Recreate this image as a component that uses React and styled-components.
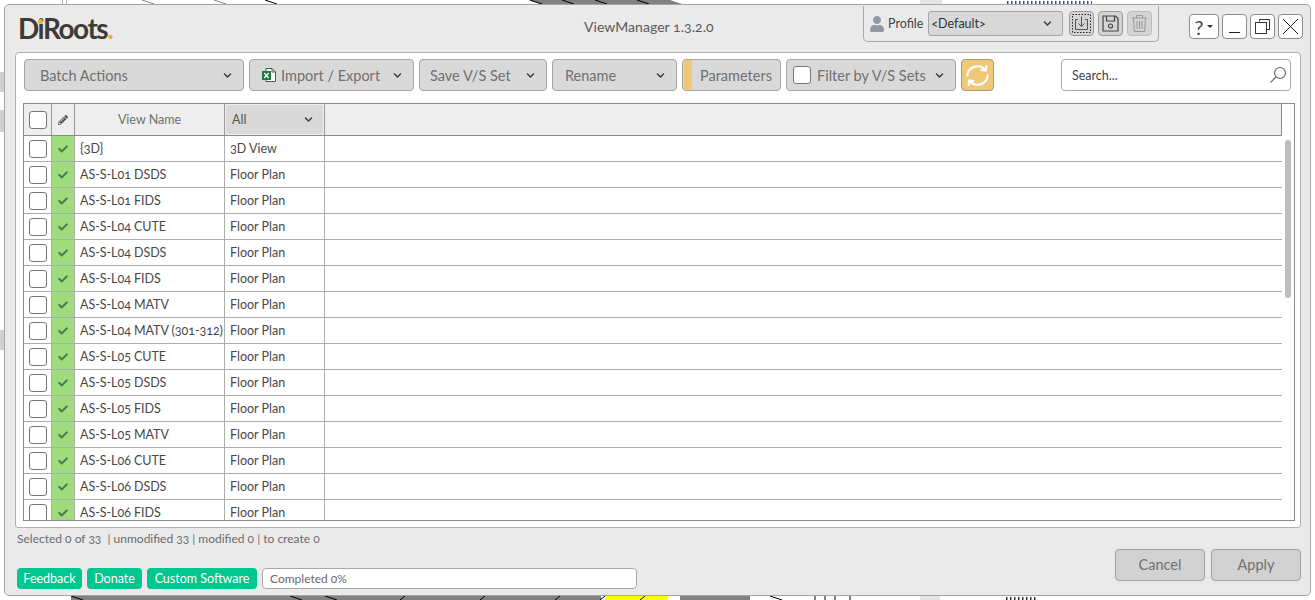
import React from "react";
import styled, { createGlobalStyle } from "styled-components";
import { FaCheck, FaPencilAlt, FaUser, FaChevronDown } from "react-icons/fa";

const rows = [
  ["{3D}", "3D View"],
  ["AS-S-L01 DSDS", "Floor Plan"],
  ["AS-S-L01 FIDS", "Floor Plan"],
  ["AS-S-L04 CUTE", "Floor Plan"],
  ["AS-S-L04 DSDS", "Floor Plan"],
  ["AS-S-L04 FIDS", "Floor Plan"],
  ["AS-S-L04 MATV", "Floor Plan"],
  ["AS-S-L04 MATV (301-312)", "Floor Plan"],
  ["AS-S-L05 CUTE", "Floor Plan"],
  ["AS-S-L05 DSDS", "Floor Plan"],
  ["AS-S-L05 FIDS", "Floor Plan"],
  ["AS-S-L05 MATV", "Floor Plan"],
  ["AS-S-L06 CUTE", "Floor Plan"],
  ["AS-S-L06 DSDS", "Floor Plan"],
  ["AS-S-L06 FIDS", "Floor Plan"],
];

const GlobalStyle = createGlobalStyle`
  html, body {
    margin: 0;
    height: 600px;
    overflow: hidden;
    background: #fff;
    font-family: "Lato", "Open Sans", sans-serif;
    font-feature-settings: "onum";
    color: #555;
  }
`;

const Desktop = styled.div`
  width: 1315px;
  height: 600px;
  padding: 4px;
  box-sizing: border-box;
  position: relative;
`;

// the drawing behind the dialog, only its edges show
const Backdrop = styled.svg`
  position: absolute;
  left: 0;
  top: 0;
`;

const Window = styled.div`
  width: 1307px;
  height: 592px;
  box-sizing: border-box;
  background: #eaeaea;
  border: 1px solid #a4a4a4;
  border-radius: 5px;
  display: flex;
  flex-direction: column;
  padding: 0 9px 0 10px;
  position: relative;
`;

const TitleBar = styled.div`
  height: 47px;
  flex: none;
  display: flex;
  align-items: flex-start;
`;

const Logo = styled.div`
  font-size: 28px;
  font-weight: 700;
  letter-spacing: -1.5px;
  color: #3c3b36;
  margin: 5px 0 0 3px;
  line-height: 36px;
  width: 566px;
  flex: none;
  position: relative;
  font-feature-settings: normal;
  span {
    color: #eeb046;
  }
`;

const LogoDot = styled.i`
  position: absolute;
  left: 20px;
  top: 9px;
  width: 5px;
  height: 5px;
  border-radius: 50%;
  background: #eeb046;
`;

const WindowTitle = styled.div`
  font-size: 14px;
  line-height: 18px;
  margin-top: 13px;
  width: 279px;
  flex: none;
  color: #5a5a5a;
  letter-spacing: 0.05px;
`;

const ProfileBox = styled.div`
  width: 296px;
  height: 36px;
  box-sizing: border-box;
  margin-top: 1px;
  border: 1px solid #a8a8a8;
  border-top: none;
  border-radius: 0 0 5px 5px;
  display: flex;
  align-items: center;
  padding: 0 0 0 5px;
  flex: none;
  margin-right: 30px;
`;

const ProfileLabel = styled.span`
  font-size: 12.5px;
  color: #444;
  margin: 0 5px 0 3px;
`;

const ProfileSelect = styled.div`
  width: 135px;
  height: 25px;
  box-sizing: border-box;
  background: #d9d9d9;
  border: 1px solid #a4a4a4;
  border-radius: 3px;
  display: flex;
  align-items: center;
  justify-content: space-between;
  padding: 0 10px 0 2px;
  font-size: 12.5px;
  color: #333;
  margin-right: 6px;
`;

const ProfileButton = styled.div`
  width: 25px;
  height: 25px;
  box-sizing: border-box;
  background: #d4d4d4;
  border: 1px solid ${(p) => (p.$faded ? "#bdbdbd" : "#9a9a9a")};
  border-radius: 4px;
  display: flex;
  align-items: center;
  justify-content: center;
  margin-right: 4px;
  flex: none;
`;

const WindowControls = styled.div`
  display: flex;
  gap: 3px;
  margin-top: 9px;
`;

const ControlButton = styled.div`
  width: ${(p) => p.$w || 25}px;
  height: 25px;
  box-sizing: border-box;
  background: #fff;
  border: 1px solid #8c8c8c;
  border-radius: 4px;
  display: flex;
  align-items: center;
  justify-content: center;
  color: #444;
  font-size: 20px;
`;

const Minimize = styled.span`
  width: 11px;
  height: 1px;
  background: #222;
  margin-top: 12px;
`;

const Caret = styled.span`
  width: 0;
  height: 0;
  margin-left: 4px;
  border-left: 3px solid transparent;
  border-right: 3px solid transparent;
  border-top: 3px solid #333;
`;

const Panel = styled.div`
  height: 476px;
  flex: none;
  box-sizing: border-box;
  background: #fff;
  border: 1px solid #b0b0b0;
  border-radius: 4px 4px 3px 3px;
  padding: 6px 5px 6px 7px;
  display: flex;
  flex-direction: column;
`;

const Toolbar = styled.div`
  display: flex;
  gap: 5px;
  height: 32px;
  flex: none;
  margin: 0 4px 12px 1px;
`;

const ToolButton = styled.div`
  width: ${(p) => p.$w}px;
  flex: none;
  box-sizing: border-box;
  background: #d9d9d9;
  border: 1px solid #a4a4a4;
  border-radius: 4px;
  display: flex;
  align-items: center;
  padding: 0 ${(p) => p.$pr || 11}px 0 ${(p) => p.$pl || 15}px;
  font-size: 14.5px;
  color: #707070;
  white-space: nowrap;
`;

const ToolLabel = styled.span`
  flex: 1;
`;

const Arrow = styled(FaChevronDown)`
  font-size: 9px;
  color: #3a3a3a;
  flex: none;
`;

const AccentBar = styled.span`
  width: 8px;
  align-self: stretch;
  background: #f0c879;
  border-radius: 3px 0 0 3px;
  margin-right: 8px;
`;

const Box = styled.span`
  display: block;
  width: 18px;
  height: 18px;
  flex: none;
  box-sizing: border-box;
  background: #fff;
  border: 1px solid #777;
  border-radius: 3px;
`;

const FilterBox = styled(Box)`
  margin-right: 6px;
`;

const RefreshButton = styled.div`
  width: 33px;
  flex: none;
  box-sizing: border-box;
  background: #f0c879;
  border: 1px solid #a89a7c;
  border-radius: 4px;
  display: flex;
  align-items: center;
  justify-content: center;
`;

const SearchBox = styled.div`
  width: 230px;
  margin-left: auto;
  box-sizing: border-box;
  background: #fff;
  border: 1px solid #a8a8a8;
  border-radius: 4px;
  display: flex;
  align-items: center;
  justify-content: space-between;
  padding: 0 3px 0 10px;
  font-size: 12.5px;
  color: #444;
`;

const Grid = styled.div`
  flex: 1;
  min-height: 0;
  border: 1px solid #8a8a8a;
  position: relative;
  overflow: hidden;
`;

const HeaderRow = styled.div`
  height: 31px;
  display: flex;
  background: #eeeeee;
  border-bottom: 1px solid #8a8a8a;
  border-right: 1px solid #8a8a8a;
  margin-right: 12px;
`;

const BodyRow = styled.div`
  height: 25px;
  display: flex;
  border-bottom: 1px solid #adadad;
  margin-right: 12px;
`;

const Cell = styled.div`
  width: ${(p) => p.$w}px;
  flex: none;
  box-sizing: border-box;
  border-right: 1px solid ${(p) => (p.$head ? "#9a9a9a" : "#adadad")};
  display: flex;
  align-items: center;
  justify-content: ${(p) => (p.$center ? "center" : "flex-start")};
  padding-left: ${(p) => p.$pl || 0}px;
  background: ${(p) => p.$bg || "transparent"};
  font-size: 12.5px;
  color: ${(p) => (p.$head ? "#6e6e6e" : "#484848")};
  white-space: nowrap;
  overflow: hidden;
`;

const NameCell = styled(Cell)`
  letter-spacing: -0.05px;
`;

const HeaderSelect = styled.div`
  width: calc(100% - 2px);
  height: calc(100% - 2px);
  box-sizing: border-box;
  margin-left: 1px;
  background: #d9d9d9;
  border-radius: 2px;
  display: flex;
  align-items: center;
  justify-content: space-between;
  padding: 0 10px 0 6px;
  color: #555;
`;

const Scrollbar = styled.div`
  position: absolute;
  right: 3px;
  top: 36px;
  width: 6px;
  height: 158px;
  background: #bdbdbd;
  border-radius: 3px;
`;

const StatusLine = styled.div`
  font-size: 12px;
  color: #6a6a6a;
  line-height: 16px;
  margin: 3px 0 0 2px;
  white-space: pre;
  flex: none;
`;

const FooterRow = styled.div`
  display: flex;
  flex: none;
  height: 40px;
  align-items: flex-end;
  margin: 2px 0 0 2px;
`;

const LinkButton = styled.div`
  width: ${(p) => p.$w}px;
  height: 21px;
  box-sizing: border-box;
  background: #00c78f;
  border-radius: 4px;
  color: #fff;
  font-size: 12.5px;
  padding-bottom: 1px;
  display: flex;
  align-items: center;
  justify-content: center;
  margin-right: 5px;
  flex: none;
`;

const Progress = styled.div`
  width: 375px;
  height: 21px;
  box-sizing: border-box;
  background: #fff;
  border: 1px solid #a8a8a8;
  border-radius: 4px;
  font-size: 12px;
  color: #6a6a6a;
  display: flex;
  align-items: center;
  padding-left: 7px;
  flex: none;
`;

const ActionGroup = styled.div`
  margin-left: auto;
  align-self: flex-start;
  display: flex;
  gap: 6px;
`;

const ActionButton = styled.div`
  width: 90px;
  height: 32px;
  box-sizing: border-box;
  background: #d2d2d2;
  border: 1px solid #a0a0a0;
  border-radius: 4px;
  color: #707070;
  font-size: 14.5px;
  padding-bottom: 2px;
  display: flex;
  align-items: center;
  justify-content: center;
  flex: none;
`;

function BackdropDrawing() {
  return (
    <Backdrop width="1315" height="600" viewBox="0 0 1315 600">
      <rect x="0" y="72" width="4" height="20" fill="#d0d0d0" />
      <rect x="0" y="110" width="4" height="22" fill="#d0d0d0" />
      <rect x="0" y="330" width="4" height="20" fill="#d0d0d0" />
      <rect x="62" y="0" width="1" height="4" fill="#b5b5b5" />
      <rect x="66" y="0" width="1" height="4" fill="#b5b5b5" />
      <path d="M142 0l12 4M214 0l12 4" stroke="#888" />
      <path d="M265 0l12 4" stroke="#000" />
      <path d="M528 0h142l12 4H540z" fill="#808080" />
      <path d="M530 0l12 4M562 0l12 4M595 0l12 4M637 0l12 4" stroke="#000" />
      <rect x="920" y="0" width="22" height="4" fill="#e4e4e4" />
      <path d="M1007 2.500h85" stroke="#2f4f8f" strokeWidth="3" strokeDasharray="1.500 2.500" />
      <rect x="71" y="596" width="530" height="4" fill="#808080" />
      <rect x="605" y="596" width="63" height="4" fill="#ffff00" />
      <rect x="680" y="596" width="70" height="4" fill="#808080" />
      <path d="M71 596l12 4M290 596l12 4M325 596l12 4M405 596l-5 4M485 596l-5 4M560 596l-5 4M605 596l-5 4M645 596l-5 4" stroke="#000" />
      <path d="M770 596l12 4M815 596v4M825 596v4M835 596v4M850 596v4" stroke="#000" />
      <rect x="920" y="596" width="20" height="4" fill="#e4e4e4" />
      <path d="M1006 598.500h30" stroke="#333" strokeWidth="3" strokeDasharray="1.500 2.500" />
    </Backdrop>
  );
}

function ExcelIcon() {
  return (
    <svg width="16" height="16" viewBox="0 0 16 16" style={{ marginRight: 4, flex: "none" }}>
      <path d="M5 1.500h6l3.500 3.500v9.500H5z" fill="#fff" stroke="#555" />
      <path d="M11 1.500V5h3.500" fill="none" stroke="#555" />
      <rect x="1" y="4" width="9" height="9" fill="#1d7a3e" />
      <path d="M3.200 6l4.400 5M7.600 6l-4.400 5" stroke="#fff" strokeWidth="1.300" />
    </svg>
  );
}

function RefreshIcon() {
  return (
    <svg width="27" height="27" viewBox="0 0 27 27" fill="none" stroke="#fff" strokeWidth="2">
      <path d="M3.500 14.500C3 8.500 8 4 14 4.200c3 .1 5.500 1.400 7.200 3.600" />
      <path d="M22.500 3.200l-.7 5.400-5.200-.6" />
      <path d="M23.500 12.500c.5 6-4.500 10.500-10.500 10.300-3-.1-5.500-1.400-7.200-3.600" />
      <path d="M4.500 23.800l.7-5.400 5.200.6" />
    </svg>
  );
}

function SearchIcon() {
  return (
    <svg width="18" height="18" viewBox="0 0 18 18" fill="none" stroke="#666" strokeWidth="1.100">
      <circle cx="11" cy="7" r="5.500" />
      <path d="M7 11l-5.500 5.500" />
    </svg>
  );
}

function LoadIcon() {
  return (
    <svg width="21" height="21" viewBox="0 0 21 21" fill="none">
      <rect x="1.500" y="1.500" width="18" height="18" stroke="#222" strokeDasharray="1.500 1.500" />
      <path d="M7 6.500H4.500v10h12v-10H14" stroke="#555" />
      <path d="M10.500 3.500v10M7.500 10.500l3 3 3-3" stroke="#555" />
    </svg>
  );
}

function SaveIcon() {
  return (
    <svg width="19" height="19" viewBox="0 0 19 19" fill="none" stroke="#444" strokeWidth="1.200">
      <path d="M2 2h12.500L17 4.500V17H2z" />
      <path d="M5.500 2v5h8V2" />
      <circle cx="9.500" cy="12" r="2" />
    </svg>
  );
}

function TrashIcon() {
  return (
    <svg width="17" height="19" viewBox="0 0 17 19" fill="none" stroke="#999">
      <path d="M1 4h15M5.500 4V1.500h6V4" />
      <path d="M2.500 4l.8 13.500h10.400L14.500 4" />
      <path d="M6 7v8M8.500 7v8M11 7v8" />
    </svg>
  );
}

function RestoreIcon() {
  return (
    <svg width="17" height="17" viewBox="0 0 17 17" fill="none" stroke="#333">
      <path d="M5.500 3.500v-2h10v10h-3" />
      <rect x="1.500" y="4.500" width="11" height="11" />
    </svg>
  );
}

function CloseIcon() {
  return (
    <svg width="19" height="19" viewBox="0 0 19 19" stroke="#222">
      <path d="M2 2l15 15M17 2L2 17" />
    </svg>
  );
}

export default function App() {
  return (
    <Desktop>
      <GlobalStyle />
      <BackdropDrawing />
      <Window>
        <TitleBar>
          <Logo>
            DiRoots<span>.</span>
            <LogoDot />
          </Logo>
          <WindowTitle>ViewManager 1.3.2.0</WindowTitle>
          <ProfileBox>
            <FaUser size={16} color="#8f9aa5" />
            <ProfileLabel>Profile</ProfileLabel>
            <ProfileSelect>
              &lt;Default&gt;
              <Arrow />
            </ProfileSelect>
            <ProfileButton>
              <LoadIcon />
            </ProfileButton>
            <ProfileButton>
              <SaveIcon />
            </ProfileButton>
            <ProfileButton $faded>
              <TrashIcon />
            </ProfileButton>
          </ProfileBox>
          <WindowControls>
            <ControlButton $w={30}>
              ?<Caret />
            </ControlButton>
            <ControlButton>
              <Minimize />
            </ControlButton>
            <ControlButton>
              <RestoreIcon />
            </ControlButton>
            <ControlButton>
              <CloseIcon />
            </ControlButton>
          </WindowControls>
        </TitleBar>
        <Panel>
          <Toolbar>
            <ToolButton $w={220}>
              <ToolLabel>Batch Actions</ToolLabel>
              <Arrow />
            </ToolButton>
            <ToolButton $w={165} $pl={11}>
              <ExcelIcon />
              <ToolLabel>Import / Export</ToolLabel>
              <Arrow />
            </ToolButton>
            <ToolButton $w={128} $pl={10}>
              <ToolLabel>Save V/S Set</ToolLabel>
              <Arrow />
            </ToolButton>
            <ToolButton $w={125} $pl={12}>
              <ToolLabel>Rename</ToolLabel>
              <Arrow />
            </ToolButton>
            <ToolButton $w={99} $pl={1} $pr={1}>
              <AccentBar />
              <ToolLabel>Parameters</ToolLabel>
            </ToolButton>
            <ToolButton $w={170} $pl={6}>
              <FilterBox />
              <ToolLabel>Filter by V/S Sets</ToolLabel>
              <Arrow />
            </ToolButton>
            <RefreshButton>
              <RefreshIcon />
            </RefreshButton>
            <SearchBox>
              Search...
              <SearchIcon />
            </SearchBox>
          </Toolbar>
          <Grid>
            <HeaderRow>
              <Cell $head $w={28} $center>
                <Box />
              </Cell>
              <Cell $head $w={23} $center>
                <FaPencilAlt size={10} color="#555" />
              </Cell>
              <Cell $head $w={150} $center>
                View Name
              </Cell>
              <Cell $head $w={100}>
                <HeaderSelect>
                  All
                  <Arrow />
                </HeaderSelect>
              </Cell>
            </HeaderRow>
            {rows.map(([name, type]) => (
              <BodyRow key={name}>
                <Cell $w={28} $center>
                  <Box />
                </Cell>
                <Cell $w={23} $center $bg="#9fdc7e">
                  <FaCheck size={10} color="#4a7a4a" />
                </Cell>
                <NameCell $w={150} $pl={5}>
                  {name}
                </NameCell>
                <Cell $w={100} $pl={5}>
                  {type}
                </Cell>
              </BodyRow>
            ))}
            <Scrollbar />
          </Grid>
        </Panel>
        <StatusLine>Selected 0 of 33  | unmodified 33 | modified 0 | to create 0</StatusLine>
        <FooterRow>
          <LinkButton $w={65}>Feedback</LinkButton>
          <LinkButton $w={55}>Donate</LinkButton>
          <LinkButton $w={110}>Custom Software</LinkButton>
          <Progress>Completed 0%</Progress>
          <ActionGroup>
            <ActionButton>Cancel</ActionButton>
            <ActionButton>Apply</ActionButton>
          </ActionGroup>
        </FooterRow>
      </Window>
    </Desktop>
  );
}
